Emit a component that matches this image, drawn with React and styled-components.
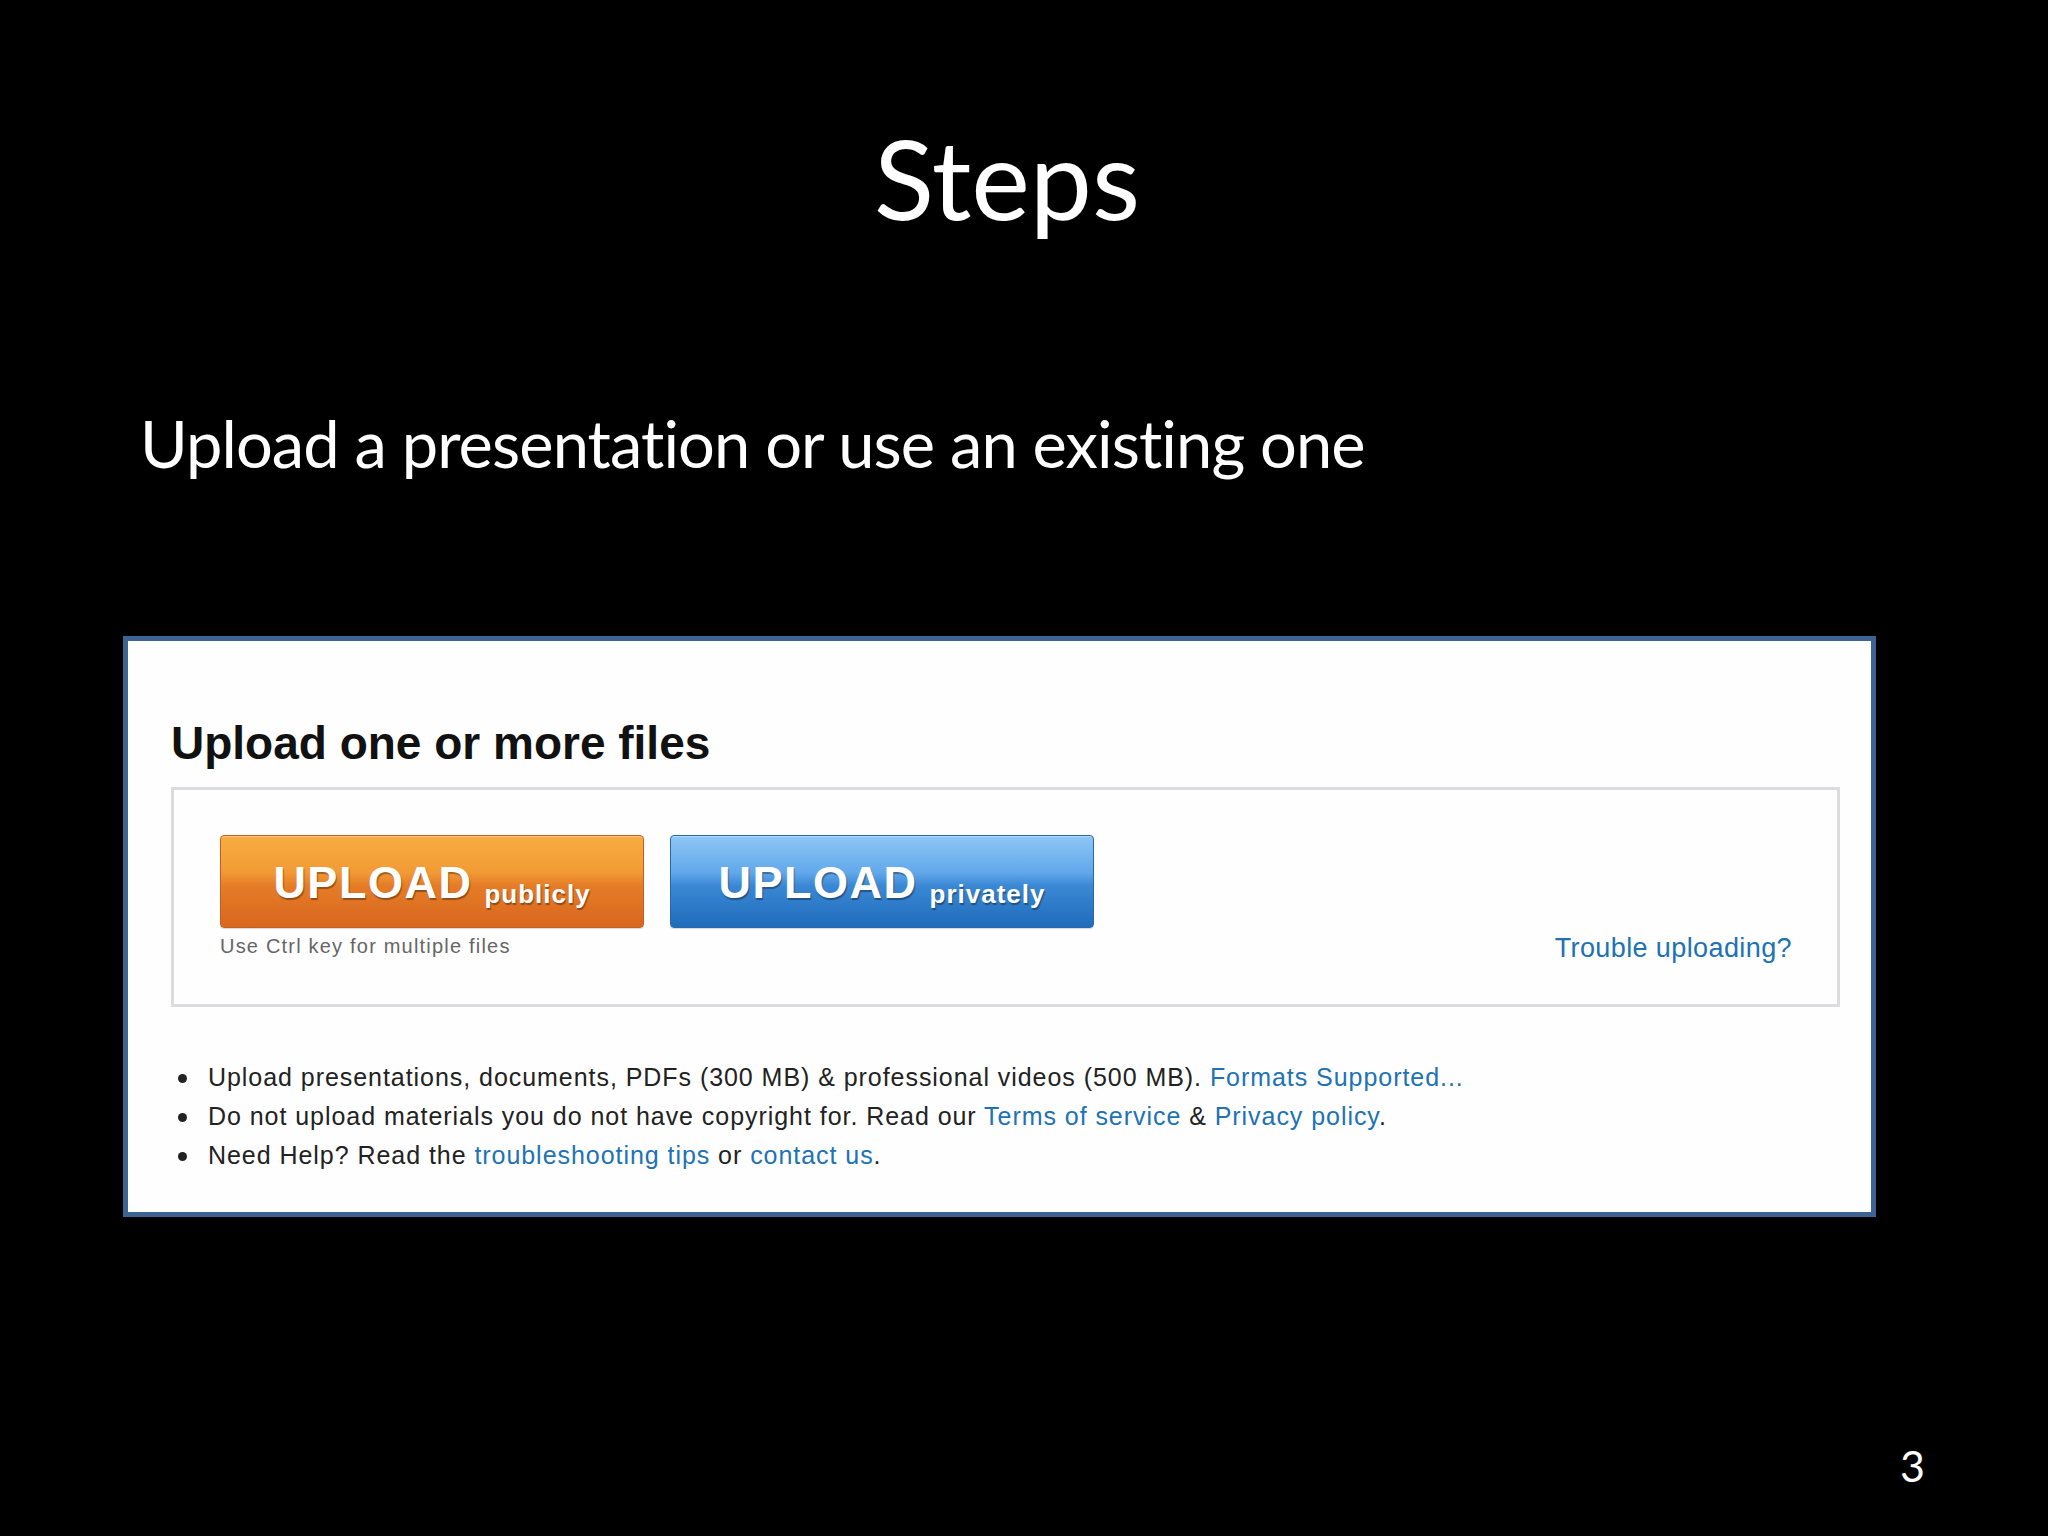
import React from 'react'
import styled, { createGlobalStyle } from 'styled-components'

const GlobalStyle = createGlobalStyle`
  html, body {
    margin: 0;
    padding: 0;
    background: #000;
  }
`
const Slide = styled.div`
  background: #000;
  box-sizing: border-box;
  display: flex;
  flex-direction: column;
  height: 1536px;
  overflow: hidden;
  padding-top: 122px;
  width: 2048px;
`
const Title = styled.h1`
  color: #fff;
  font-family: Lato, "Open Sans", sans-serif;
  font-size: 111px;
  font-weight: 400;
  line-height: 110px;
  margin: 0;
  padding-right: 34px;
  text-align: center;
`
const Subtitle = styled.p`
  color: #fff;
  font-family: Lato, "Open Sans", sans-serif;
  font-size: 65px;
  font-variant-ligatures: none;
  letter-spacing: -0.9px;
  line-height: 66px;
  margin: 178px 0 0;
  padding-left: 140px;
`
const Panel = styled.section`
  background: #fefefe;
  border: 5px solid #3d6491;
  box-sizing: border-box;
  height: 581px;
  margin: 160px 0 0 123px;
  padding: 80px 31px 0 43px;
  width: 1753px;
`
const PanelHeading = styled.h2`
  color: #111;
  font-family: "Liberation Sans", Arial, sans-serif;
  font-size: 46px;
  font-weight: 700;
  line-height: 45px;
  margin: 0 0 21px;
`
const UploadBox = styled.div`
  align-items: flex-start;
  border: 3px solid #dcdcde;
  box-sizing: border-box;
  display: flex;
  height: 220px;
  padding: 45px 45px 0 46px;
`
const ButtonGroup = styled.div`
  display: flex;
  flex-direction: column;
`
const ButtonRow = styled.div`
  display: flex;
  gap: 26px;
`
const palettes = {
  orange: {
    border: '#c55f1d',
    bg: 'linear-gradient(#f8ad42 0%, #f29a35 40%, #e57c27 55%, #d9661f 100%)',
  },
  blue: {
    border: '#2868ab',
    bg: 'linear-gradient(#8ec6f5 0%, #62a8eb 40%, #3a87d4 55%, #1f6cbb 100%)',
  },
}
const UploadButton = styled.button`
  background: ${p => palettes[p.$tone].bg};
  border: 1px solid ${p => palettes[p.$tone].border};
  border-radius: 4px;
  box-shadow: inset 0 1px 0 rgba(255, 255, 255, 0.35), 0 1px 1px rgba(0, 0, 0, 0.15);
  box-sizing: border-box;
  color: #fff;
  cursor: pointer;
  font-family: "Liberation Sans", Arial, sans-serif;
  font-weight: 700;
  height: 93px;
  line-height: 93px;
  padding: 0;
  text-align: center;
  text-shadow: 1px 2px 1px rgba(0, 0, 0, 0.35);
  white-space: nowrap;
  width: 424px;
`
const BigWord = styled.span`
  font-size: 45px;
  letter-spacing: 1.5px;
  margin-right: 12px;
`
const SmallWord = styled.span`
  font-size: 26px;
  letter-spacing: 1px;
  vertical-align: -5px;
`
const Hint = styled.span`
  color: #666;
  font-family: "Liberation Sans", Arial, sans-serif;
  font-size: 20px;
  letter-spacing: 1.2px;
  line-height: 20px;
  margin-top: 8px;
`
const Link = styled.a`
  color: #2072b4;
  cursor: pointer;
  text-decoration: none;
`
const TroubleLink = styled(Link)`
  font-family: "Liberation Sans", Arial, sans-serif;
  font-size: 27px;
  letter-spacing: 0.4px;
  line-height: 27px;
  margin: 100px 0 0 auto;
`
const Notes = styled.ul`
  color: #222;
  font-family: "Liberation Sans", Arial, sans-serif;
  font-size: 25px;
  letter-spacing: 0.95px;
  line-height: 39px;
  list-style: none;
  margin: 51px 0 0;
  padding: 0;
`
const Note = styled.li`
  align-items: center;
  display: flex;
  white-space: nowrap;
  &::before {
    background: #222;
    border-radius: 50%;
    content: '';
    flex: none;
    height: 9px;
    margin: 2px 21px 0 7px;
    width: 9px;
  }
`
const Footer = styled.footer`
  color: #fff;
  display: flex;
  font-family: Lato, "Open Sans", sans-serif;
  font-size: 43px;
  justify-content: flex-end;
  line-height: 43px;
  margin-top: auto;
  padding: 0 123px 49px 0;
`

const App = () => (
  <Slide>
    <GlobalStyle />
    <Title>Steps</Title>
    <Subtitle>Upload a presentation or use an existing one</Subtitle>
    <Panel>
      <PanelHeading>Upload one or more files</PanelHeading>
      <UploadBox>
        <ButtonGroup>
          <ButtonRow>
            <UploadButton $tone="orange">
              <BigWord>UPLOAD</BigWord>
              <SmallWord>publicly</SmallWord>
            </UploadButton>
            <UploadButton $tone="blue">
              <BigWord>UPLOAD</BigWord>
              <SmallWord>privately</SmallWord>
            </UploadButton>
          </ButtonRow>
          <Hint>Use Ctrl key for multiple files</Hint>
        </ButtonGroup>
        <TroubleLink>Trouble uploading?</TroubleLink>
      </UploadBox>
      <Notes>
        <Note>
          <span>
            Upload presentations, documents, PDFs (300 MB) &amp; professional videos (500 MB).{' '}
            <Link>Formats Supported...</Link>
          </span>
        </Note>
        <Note>
          <span>
            Do not upload materials you do not have copyright for. Read our{' '}
            <Link>Terms of service</Link> &amp; <Link>Privacy policy</Link>.
          </span>
        </Note>
        <Note>
          <span>
            Need Help? Read the <Link>troubleshooting tips</Link> or <Link>contact us</Link>.
          </span>
        </Note>
      </Notes>
    </Panel>
    <Footer>3</Footer>
  </Slide>
)

export default App
